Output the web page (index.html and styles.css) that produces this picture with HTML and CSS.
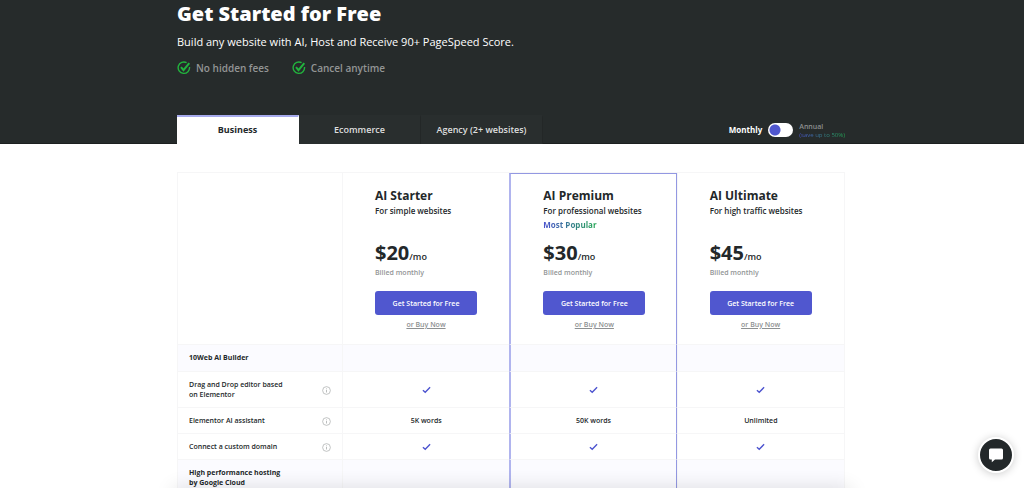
FILE: index.html
```html
<!DOCTYPE html>
<html lang="en">
<head>
<meta charset="utf-8">
<title>Pricing</title>
<meta name="viewport" content="width=device-width, initial-scale=1">
<link rel="stylesheet" href="styles.css">
</head>
<body>
<svg class="defs" aria-hidden="true">
  <symbol id="tick" viewBox="0 0 10 8"><path d="M1 4.2 3.6 6.6 9 1" fill="none" stroke="currentColor" stroke-width="1.5"/></symbol>
  <symbol id="info" viewBox="0 0 10 10"><circle cx="5" cy="5" r="4.3" fill="none" stroke="currentColor" stroke-width=".8"/><path d="M5 4.4v2.8M5 2.7v.9" stroke="currentColor" stroke-width=".9"/></symbol>
  <symbol id="ok" viewBox="0 0 14 14"><path d="M9.6 1.7A5.7 5.7 0 1 0 12.5 6" fill="none" stroke="currentColor" stroke-width="1.4"/><path d="M4 6.2 6.5 9.2 12.3 2.2" fill="none" stroke="currentColor" stroke-width="2"/></symbol>
</svg>
<header class="hero">
  <div class="wrap">
    <h1 class="title">Get Started for Free</h1>
    <p class="lead">Build any website with AI, Host and Receive 90+ PageSpeed Score.</p>
    <ul class="perks">
      <li><svg class="ok"><use href="#ok"/></svg>No hidden fees</li>
      <li><svg class="ok"><use href="#ok"/></svg>Cancel anytime</li>
    </ul>
    <div class="bar">
      <div class="tabs" role="tablist">
        <button class="tab active" role="tab" aria-selected="true">Business</button>
        <button class="tab" role="tab" aria-selected="false">Ecommerce</button>
        <button class="tab" role="tab" aria-selected="false">Agency (2+ websites)</button>
      </div>
      <div class="billing">
        <label class="monthly" for="period">Monthly</label>
        <input class="switch" type="checkbox" role="switch" id="period">
        <label class="annual" for="period">Annual<span class="save gradient">(save up to 50%)</span></label>
      </div>
    </div>
  </div>
</header>
<main class="wrap">
  <table class="plans">
    <colgroup><col class="c-name"><col class="c-plan"><col class="c-plan"><col class="c-plan"></colgroup>
    <thead>
      <tr>
        <td></td>
        <th scope="col"><div class="plan">
          <h2 class="name">AI Starter</h2><p class="for">For simple websites</p><p class="popular"></p>
          <p class="price">$20<span class="per">/mo</span></p><p class="billed">Billed monthly</p>
          <button class="cta">Get Started for Free</button><a class="buy" href="#">or Buy Now</a>
        </div></th>
        <th scope="col" class="best"><div class="plan">
          <h2 class="name">AI Premium</h2><p class="for">For professional websites</p><p class="popular"><span class="gradient">Most Popular</span></p>
          <p class="price">$30<span class="per">/mo</span></p><p class="billed">Billed monthly</p>
          <button class="cta">Get Started for Free</button><a class="buy" href="#">or Buy Now</a>
        </div></th>
        <th scope="col"><div class="plan">
          <h2 class="name">AI Ultimate</h2><p class="for">For high traffic websites</p><p class="popular"></p>
          <p class="price">$45<span class="per">/mo</span></p><p class="billed">Billed monthly</p>
          <button class="cta">Get Started for Free</button><a class="buy" href="#">or Buy Now</a>
        </div></th>
      </tr>
    </thead>
    <tbody>
      <tr class="group"><th scope="row">10Web AI Builder</th><td></td><td class="best"></td><td></td></tr>
      <tr><th scope="row"><div class="feature"><span class="label">Drag and Drop editor based on Elementor</span><svg class="info"><use href="#info"/></svg></div></th><td><svg class="tick"><use href="#tick"/></svg></td><td class="best"><svg class="tick"><use href="#tick"/></svg></td><td><svg class="tick"><use href="#tick"/></svg></td></tr>
      <tr><th scope="row"><div class="feature"><span class="label">Elementor AI assistant</span><svg class="info"><use href="#info"/></svg></div></th><td>5K words</td><td class="best">50K words</td><td>Unlimited</td></tr>
      <tr><th scope="row"><div class="feature"><span class="label">Connect a custom domain</span><svg class="info"><use href="#info"/></svg></div></th><td><svg class="tick"><use href="#tick"/></svg></td><td class="best"><svg class="tick"><use href="#tick"/></svg></td><td><svg class="tick"><use href="#tick"/></svg></td></tr>
      <tr class="group"><th scope="row"><span class="label">High performance hosting by Google Cloud</span></th><td></td><td class="best"></td><td></td></tr>
    </tbody>
  </table>
</main>
<div class="fade"></div>
<button class="chat" aria-label="Open chat"><svg class="bubble" viewBox="0 0 16 16"><path d="M2.5 1.5h11a1.5 1.5 0 0 1 1.5 1.5v8a1.5 1.5 0 0 1-1.5 1.5H7L3.8 15.2V12.5H2.5A1.5 1.5 0 0 1 1 11V3a1.5 1.5 0 0 1 1.5-1.5z" fill="currentColor"/></svg></button>
</body>
</html>
```
FILE: styles.css
```css
* { box-sizing: border-box; }
body {
  margin: 0;
  height: 100vh;
  overflow: hidden;
  background: #fff;
  color: #23282a;
  font-family: "Open Sans", sans-serif;
  font-size: 7px;
}
h1, h2, p, ul { margin: 0; padding: 0; }
button { border: 0; font-family: inherit; cursor: pointer; }
.defs { display: none; }
.wrap { max-width: 670px; margin: 0 auto; padding-right: 2px; }

.hero { background: #262b2b; border-bottom: 1px solid #1c2020; color: #fff; }
.title { font-size: 20px; line-height: 28px; font-weight: 800; }
.lead { padding-top: 6px; font-size: 11px; line-height: 16px; font-weight: 500; }
.perks {
  display: flex;
  gap: 23px;
  padding: 10px 0 39px;
  list-style: none;
  color: #939595;
  font-size: 10px;
  line-height: 16px;
  font-weight: 600;
}
.perks li { display: flex; align-items: center; gap: 5px; }
.ok { width: 14px; height: 14px; color: #22b33e; }
.bar { display: flex; justify-content: space-between; align-items: center; margin-bottom: -1px; }
.tabs { display: flex; }
.tab {
  width: 122px;
  height: 29px;
  padding: 0 0 2px;
  border-top: 2px solid #292e2e;
  border-right: 1px solid #232727;
  background: #292e2e;
  color: #dedfdf;
  font-size: 9px;
  font-weight: 600;
}
.tab.active { border-top-color: #a6aaed; border-right-color: #fff; background: #fff; color: #23282a; font-weight: 700; }
.billing { display: flex; align-items: center; gap: 6px; }
.monthly { font-size: 8px; font-weight: 700; }
.switch {
  appearance: none;
  width: 25px;
  height: 14px;
  margin: 0;
  border-radius: 7px;
  background: radial-gradient(circle at 7px 7px, #5057cf 5px, #fff 6px);
}
.annual { display: grid; padding-top: 2px; color: #8c8f8f; font-size: 7px; line-height: 9px; font-weight: 600; }
.save { font-size: 6px; line-height: 8px; font-weight: 400; }
.gradient {
  background: linear-gradient(90deg, #4b52cf, #22a651);
  background-clip: text;
  -webkit-background-clip: text;
  color: transparent;
}

.plans {
  width: 100%;
  margin-top: 28px;
  table-layout: fixed;
  border-spacing: 0;
  border-top: 1px solid #f6f6f7;
  border-right: 1px solid #f6f6f7;
}
.c-name { width: 165px; }
.plans th, .plans td {
  padding: 8px 11px 7px;
  border-left: 1px solid #f6f6f7;
  border-bottom: 1px solid #f6f6f7;
  line-height: 10px;
  font-weight: 600;
  text-align: center;
  vertical-align: middle;
}
.plans tbody th { text-align: left; }
.plans .best { border-left: 2px solid #b0b4ee; border-right: 1px solid #9398e2; }
.plans thead th { padding: 1px 0 0; text-align: left; vertical-align: top; }
.plans thead .best { padding: 0; border-top: 1px solid #9398e2; }
.plan { display: flex; flex-direction: column; padding: 14px 32px; }
.name { font-size: 12px; line-height: 16px; font-weight: 700; }
.for { font-size: 8px; line-height: 14px; }
.popular { height: 14px; font-size: 8px; line-height: 14px; font-weight: 700; }
.price { padding-top: 9px; font-size: 20px; line-height: 24px; font-weight: 700; }
.per { font-size: 9px; font-weight: 600; }
.billed { color: #929596; font-size: 7px; line-height: 8px; }
.cta {
  width: 102px;
  height: 24px;
  margin: 14px 0 5px;
  padding: 0;
  border-radius: 3px;
  background: #5057cf;
  color: #fff;
  font-size: 7px;
  font-weight: 600;
}
.buy { width: 102px; color: #8d9091; line-height: 10px; text-align: center; }
.plans .group th, .plans .group td { padding-bottom: 8px; background: #fbfbff; }
.plans .group th { font-weight: 700; }
.feature { display: flex; align-items: center; justify-content: space-between; }
.label { display: block; max-width: 96px; }
.info { width: 9px; height: 9px; color: #aaadad; }
.tick { display: block; width: 9px; height: 8px; margin: 0 auto; color: #4c53cf; }

.fade {
  position: fixed;
  right: 17%;
  bottom: -12px;
  left: 17%;
  height: 10px;
  box-shadow: 0 0 20px rgba(0, 0, 0, .2);
}
.chat {
  position: fixed;
  right: 10px;
  bottom: 15px;
  display: grid;
  place-items: center;
  width: 36px;
  height: 36px;
  padding: 0;
  border: 2px solid #fff;
  border-radius: 50%;
  background: #23282a;
  color: #fff;
  box-shadow: 0 1px 8px rgba(0, 0, 0, .2);
}
.bubble { width: 16px; height: 16px; }
```
